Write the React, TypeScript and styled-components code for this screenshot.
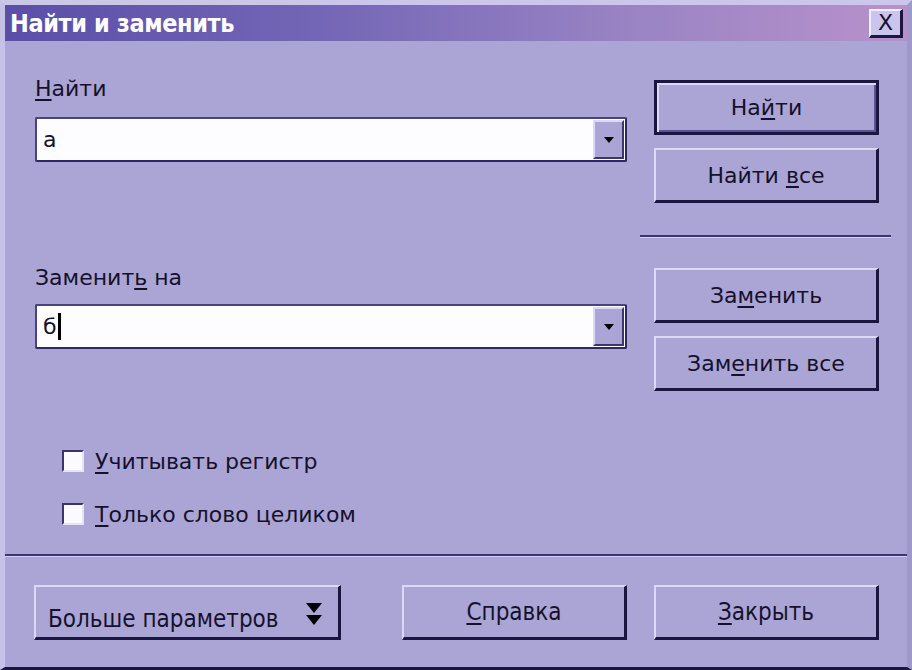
import React from "react";
import styled, { createGlobalStyle, css } from "styled-components";

const Global = createGlobalStyle`
  html, body {
    margin: 0;
    padding: 0;
    background: #aba5d5;
  }
  * {
    box-sizing: border-box;
  }
`;

const ink = "#15112c";
const face = "#aba5d5";
const hi = "#dcd8f6";
const shadow = "#1b163f";

const Window = styled.div`
  width: 912px;
  height: 670px;
  background: ${face};
  border-top: 5px solid #cbc7ea;
  border-left: 5px solid #c5c1e8;
  border-right: 5px solid #9f99cb;
  border-bottom: 3px solid ${shadow};
  display: flex;
  flex-direction: column;
  font-family: "DejaVu Sans", Verdana, sans-serif;
  color: ${ink};
  overflow: hidden;
`;

const TitleBar = styled.div`
  height: 36px;
  flex: none;
  display: flex;
  align-items: center;
  justify-content: space-between;
  padding: 0 4px 0 5px;
  background: linear-gradient(90deg, #5a4ea7 0%, #7466b6 35%, #9a84c4 70%, #b891cb 100%);
`;

const Title = styled.div`
  font-family: "DejaVu Sans Condensed", "DejaVu Sans", sans-serif;
  font-weight: bold;
  font-size: 25px;
  color: #ffffff;
  letter-spacing: -0.4px;
`;

const CloseButton = styled.div`
  width: 34px;
  height: 29px;
  background: #c9c5ee;
  border-top: 2px solid #f0eeff;
  border-left: 2px solid #f0eeff;
  border-right: 3px solid ${shadow};
  border-bottom: 3px solid ${shadow};
  display: flex;
  align-items: center;
  justify-content: center;
  font-size: 22px;
  line-height: 1;
  color: ${ink};
`;

const Main = styled.div`
  height: 513px;
  flex: none;
  display: flex;
  padding-left: 30px;
  gap: 27px;
`;

const LeftCol = styled.div`
  width: 592px;
  display: flex;
  flex-direction: column;
`;

const RightCol = styled.div`
  width: 225px;
  display: flex;
  flex-direction: column;
`;

const Label = styled.div<{ $top: number }>`
  margin-top: ${(p) => p.$top}px;
  height: 24px;
  line-height: 24px;
  font-size: 22px;
`;

const Combo = styled.div<{ $top: number }>`
  margin-top: ${(p) => p.$top}px;
  height: 45px;
  display: flex;
  align-items: stretch;
  background: #fdfcff;
  border-top: 2px solid #4a437f;
  border-left: 2px solid #4a437f;
  border-right: 2px solid #2e2862;
  border-bottom: 2px solid #2e2862;
  border-radius: 2px;
  padding: 1px 1px 1px 0;
`;

const ComboText = styled.div`
  flex: 1;
  display: flex;
  align-items: center;
  padding-left: 6px;
  font-size: 22px;
`;

const Caret = styled.span`
  display: inline-block;
  width: 3px;
  height: 27px;
  background: #000;
  margin-left: 1px;
`;

const DropButton = styled.div`
  width: 31px;
  background: ${face};
  border-top: 2px solid ${hi};
  border-left: 2px solid ${hi};
  border-right: 2px solid #3b3570;
  border-bottom: 2px solid #3b3570;
  display: flex;
  align-items: center;
  justify-content: center;
`;

const CheckRow = styled.div<{ $top: number }>`
  margin-top: ${(p) => p.$top}px;
  margin-left: 27px;
  height: 26px;
  display: flex;
  align-items: center;
  gap: 11px;
  font-size: 22px;
`;

const CheckBox = styled.div`
  width: 22px;
  height: 22px;
  background: #fbfaff;
  border-top: 2px solid #3a3468;
  border-left: 2px solid #3a3468;
  border-right: 2px solid #e6e3fa;
  border-bottom: 2px solid #e6e3fa;
`;

const Button = styled.div<{ $top?: number; $width?: number; $default?: boolean; $narrow?: boolean }>`
  margin-top: ${(p) => p.$top ?? 0}px;
  width: ${(p) => p.$width ?? 225}px;
  height: 55px;
  flex: none;
  display: flex;
  align-items: center;
  justify-content: center;
  gap: 10px;
  font-size: 22px;
  background: ${face};
  border-top: 2px solid ${hi};
  border-left: 2px solid ${hi};
  border-right: 3px solid ${shadow};
  border-bottom: 3px solid ${shadow};
  ${(p) =>
    p.$default &&
    css`
      border: 3px solid ${shadow};
      box-shadow: inset 2px 2px 0 ${hi}, inset -2px -2px 0 #5b5490;
    `}
  ${(p) =>
    p.$narrow &&
    css`
      font-family: "DejaVu Sans Condensed", "DejaVu Sans", sans-serif;
      font-size: 24px;
    `}
`;

const MoreButton = styled(Button)`
  justify-content: space-between;
  padding: 0 14px 0 12px;
`;

const MoreText = styled.span`
  padding-top: 14px;
`;

const ArrowBox = styled.span`
  display: flex;
  padding-top: 4px;
`;

const Key = styled.span`
  text-decoration: underline;
  text-underline-offset: 3px;
  text-decoration-thickness: 2px;
`;

const RightRule = styled.div`
  margin: 32px -12px 0 -14px;
  height: 3px;
  border-top: 2px solid #3c3575;
  border-bottom: 1px solid #d6d2f4;
`;

const Rule = styled.div`
  flex: none;
  height: 3px;
  border-top: 2px solid #3c3575;
  border-bottom: 1px solid #d6d2f4;
`;

const Footer = styled.div`
  display: flex;
  padding: 28px 0 0 29px;
`;

const Spacer = styled.div<{ $w: number }>`
  width: ${(p) => p.$w}px;
  flex: none;
`;

const Triangle = () => (
  <svg width="12" height="8" viewBox="0 0 12 8">
    <path d="M1 1h10L6 7z" fill="#000" />
  </svg>
);

const DoubleArrow = () => (
  <svg width="20" height="26" viewBox="0 0 20 26">
    <path d="M2 2h16L10 12z" fill="#000" />
    <path d="M2 14h16L10 24z" fill="#000" />
  </svg>
);

export default function App() {
  return (
    <>
      <Global />
      <Window>
        <TitleBar>
          <Title>Найти и заменить</Title>
          <CloseButton>X</CloseButton>
        </TitleBar>
        <Main>
          <LeftCol>
            <Label $top={36}>
              <Key>Н</Key>айти
            </Label>
            <Combo $top={16}>
              <ComboText>а</ComboText>
              <DropButton>
                <Triangle />
              </DropButton>
            </Combo>
            <Label $top={104}>
              Заменит<Key>ь</Key> на
            </Label>
            <Combo $top={14}>
              <ComboText>
                б<Caret />
              </ComboText>
              <DropButton>
                <Triangle />
              </DropButton>
            </Combo>
            <CheckRow $top={99}>
              <CheckBox />
              <span>
                <Key>У</Key>читывать регистр
              </span>
            </CheckRow>
            <CheckRow $top={27}>
              <CheckBox />
              <span>
                <Key>Т</Key>олько слово целиком
              </span>
            </CheckRow>
          </LeftCol>
          <RightCol>
            <Button $top={39} $default>
              <span>
                На<Key>й</Key>ти
              </span>
            </Button>
            <Button $top={13}>
              <span>
                Найти <Key>в</Key>се
              </span>
            </Button>
            <RightRule />
            <Button $top={30}>
              <span>
                За<Key>м</Key>енить
              </span>
            </Button>
            <Button $top={13}>
              <span>
                Зам<Key>е</Key>нить все
              </span>
            </Button>
          </RightCol>
        </Main>
        <Rule />
        <Footer>
          <MoreButton $width={307} $narrow>
            <MoreText>Больше параметров</MoreText>
            <ArrowBox>
              <DoubleArrow />
            </ArrowBox>
          </MoreButton>
          <Spacer $w={61} />
          <Button $narrow>
            <span>
              <Key>С</Key>правка
            </span>
          </Button>
          <Spacer $w={27} />
          <Button $narrow>
            <span>
              <Key>З</Key>акрыть
            </span>
          </Button>
        </Footer>
      </Window>
    </>
  );
}
